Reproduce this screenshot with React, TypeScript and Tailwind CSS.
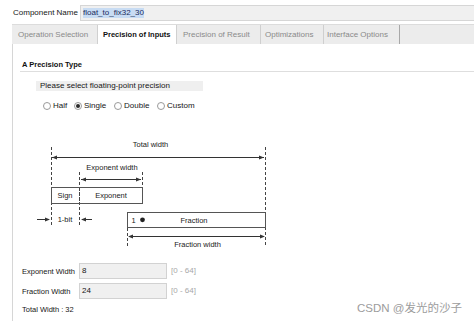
import React from "react";

const SVGF = "Liberation Sans, Arial, sans-serif";

function AR({ x, y }: { x: number; y: number }) {
  return <polygon points={`${x},${y} ${x - 5},${y - 2} ${x - 5},${y + 2}`} fill="#333" />;
}
function AL({ x, y }: { x: number; y: number }) {
  return <polygon points={`${x},${y} ${x + 5},${y - 2} ${x + 5},${y + 2}`} fill="#333" />;
}

function Radio({ label, checked, w }: { label: string; checked?: boolean; w: string }) {
  return (
    <div className={`flex items-center ${w}`}>
      <div className="w-[8px] h-[8px] rounded-full border border-[#9a9a9a] bg-white flex items-center justify-center">
        {checked && <div className="w-[4px] h-[4px] rounded-full bg-[#2a2a2a]" />}
      </div>
      <span className="ml-[2px] text-[8px] leading-[10px] whitespace-nowrap">{label}</span>
    </div>
  );
}

function Diagram() {
  const dash = { stroke: "#444", strokeWidth: 1, strokeDasharray: "3 2" };
  const solid = { stroke: "#333", strokeWidth: 1 };
  const txt = { fontFamily: SVGF, fontSize: 7.5, fill: "#1a1a1a", dominantBaseline: "central" as const };
  return (
    <svg width={250} height={112} viewBox="30 138 250 112" className="block">
      <text x={150.5} y={144} textAnchor="middle" {...txt}>Total width</text>
      <line x1={52} y1={157.5} x2={264} y2={157.5} {...solid} />
      <AL x={52} y={157.5} />
      <AR x={264} y={157.5} />

      <line x1={51.5} y1={147} x2={51.5} y2={226} {...dash} />
      <line x1={79.5} y1={172} x2={79.5} y2={226} {...dash} />
      <line x1={142.5} y1={172} x2={142.5} y2={187} {...dash} />
      <line x1={265.5} y1={147} x2={265.5} y2={246} {...dash} />
      <line x1={127.5} y1={228} x2={127.5} y2={246} {...dash} />

      <text x={112} y={167.5} textAnchor="middle" {...txt}>Exponent width</text>
      <line x1={81} y1={179.5} x2={141} y2={179.5} {...solid} />
      <AL x={81} y={179.5} />
      <AR x={141} y={179.5} />

      <rect x={51.5} y={187.5} width={91} height={16} fill="none" stroke="#555" strokeWidth={1} />
      <line x1={79.5} y1={188} x2={79.5} y2={203} {...dash} />
      <text x={65} y={195.7} textAnchor="middle" {...txt}>Sign</text>
      <text x={111} y={195.7} textAnchor="middle" {...txt}>Exponent</text>

      <line x1={37} y1={219.5} x2={49} y2={219.5} {...solid} />
      <AR x={50} y={219.5} />
      <text x={65} y={219.7} textAnchor="middle" {...txt}>1-bit</text>
      <line x1={82} y1={219.5} x2={92} y2={219.5} {...solid} />
      <AL x={81} y={219.5} />

      <rect x={127.5} y={212.5} width={138} height={15} fill="none" stroke="#555" strokeWidth={1} />
      <text x={131.5} y={220.2} {...txt}>1</text>
      <circle cx={142.5} cy={219.8} r={2.4} fill="#222" />
      <text x={194} y={220.2} textAnchor="middle" {...txt}>Fraction</text>

      <line x1={129} y1={236.5} x2={264} y2={236.5} {...solid} />
      <AL x={128} y={236.5} />
      <AR x={265} y={236.5} />
      <text x={197.5} y={244.7} textAnchor="middle" {...txt}>Fraction width</text>
    </svg>
  );
}

function FieldRow({ label, value, mt }: { label: string; value: string; mt: string }) {
  return (
    <div className={`flex items-center h-[16px] ml-[9px] ${mt}`}>
      <div className="w-[57px] text-[7.5px] leading-[9px] whitespace-nowrap">{label}</div>
      <div className="w-[88px] h-[16px] bg-[#f0f0f0] border border-[#d2d2d2] flex items-center pl-[2px] text-[8px] leading-[10px]">
        {value}
      </div>
      <div className="ml-[4px] text-[8px] leading-[10px] text-[#a8a8a8] whitespace-nowrap">[0 - 64]</div>
    </div>
  );
}

export default function App() {
  return (
    <div className="relative w-[474px] h-[321px] overflow-hidden bg-white font-['Liberation_Sans',Arial,sans-serif] text-[#161616] flex flex-col">
      <div className="flex items-center pt-[5px] h-[21px] shrink-0">
        <div className="w-[80px] pl-[13px] text-[8px] leading-[10px] whitespace-nowrap">Component Name</div>
        <div className="flex-1 h-[16px] bg-[#f0f0f0] border border-[#d6d6d6] border-r-0 flex items-center pl-[2px]">
          <span className="bg-[#c8dcf3] text-[#1b2b5c] text-[8px] leading-[10px]">float_to_fix32_30</span>
        </div>
      </div>

      <div className="mt-[3px] ml-[12px] h-[20px] shrink-0 flex bg-[#ececec] border-t border-[#dcdcdc] text-[8px] leading-[10px] whitespace-nowrap">
        <div className="w-[85px] pl-[6px] flex items-center text-[#8a8a8a]">Operation Selection</div>
        <div className="w-[80px] pl-[5px] flex items-center bg-white border-x border-[#d0d0d0] font-bold text-[7.5px] text-[#111]">
          Precision of Inputs
        </div>
        <div className="w-[84px] pl-[6px] flex items-center text-[#8a8a8a] border-r border-[#cfcfcf]">Precision of Result</div>
        <div className="w-[63px] pl-[4px] flex items-center text-[#8a8a8a] border-r border-[#cfcfcf]">Optimizations</div>
        <div className="w-[76px] pl-[3px] flex items-center text-[#8a8a8a] border-r border-[#a8a8a8]">Interface Options</div>
        <div className="flex-1" />
      </div>

      <div className="flex-1 ml-[12px] border-l border-[#d6d6d6] flex flex-col">
        <div className="mt-[16px] ml-[7px] h-[12px] border-b border-[#dedede] pl-[2px] text-[7.5px] font-bold leading-[9px] text-[#111]">
          A Precision Type
        </div>
        <div className="mt-[9px] ml-[23px] w-[167px] h-[10px] bg-[#efefef] pl-[4px] text-[8px] leading-[10px] whitespace-nowrap">
          Please select floating-point precision
        </div>
        <div className="mt-[10px] ml-[30px] h-[10px] flex items-center">
          <Radio label="Half" w="w-[31px]" />
          <Radio label="Single" checked w="w-[40px]" />
          <Radio label="Double" w="w-[43px]" />
          <Radio label="Custom" w="w-[45px]" />
        </div>
        <div className="mt-[27px] ml-[17px]">
          <Diagram />
        </div>
        <FieldRow label="Exponent Width" value="8" mt="mt-[13px]" />
        <FieldRow label="Fraction Width" value="24" mt="mt-[4px]" />
        <div className="mt-[6px] ml-[9px] text-[7.5px] leading-[9px] whitespace-nowrap">Total Width : 32</div>
      </div>

      <div className="absolute left-[357px] top-[302px] text-[11.5px] leading-[13px] text-[#9c9c9c] whitespace-nowrap font-['Liberation_Sans','Noto_Sans_CJK_SC',sans-serif]">
        CSDN @发光的沙子
      </div>
    </div>
  );
}
